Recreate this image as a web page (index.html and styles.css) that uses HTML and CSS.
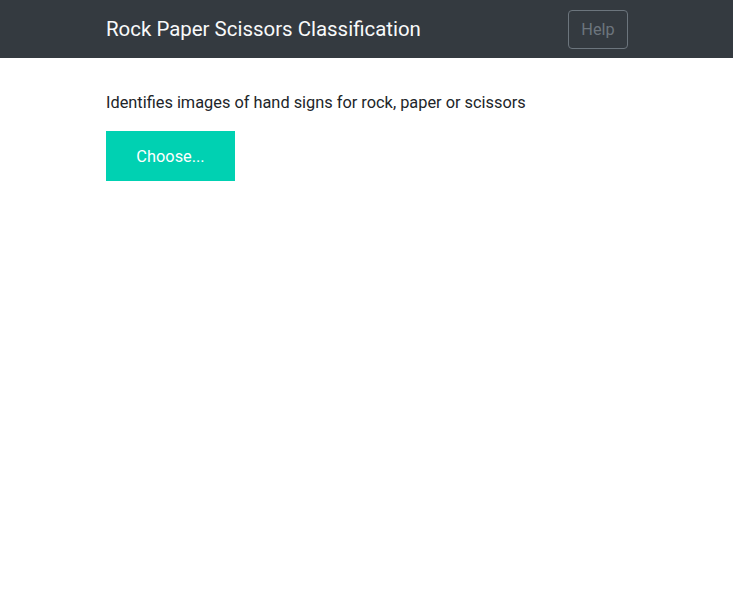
FILE: index.html
```html
<!DOCTYPE html>
<html>
<head>
<meta charset="utf-8">
<link rel="stylesheet" href="styles.css">
</head>
<body>
<header class="navbar">
  <div class="container nav-inner">
    <span class="brand">Rock Paper Scissors Classification</span>
    <button class="help-btn">Help</button>
  </div>
</header>
<main class="container content">
  <p class="lead">Identifies images of hand signs for rock, paper or scissors</p>
  <button class="choose-btn">Choose...</button>
</main>
</body>
</html>
```
FILE: styles.css
```css
html, body {
  margin: 0;
  padding: 0;
  background: #ffffff;
  font-family: Roboto, "Liberation Sans", sans-serif;
  color: #212529;
}
.container {
  width: 521px;
  margin: 0 auto;
}
.navbar {
  background: #343a40;
  height: 58px;
}
.nav-inner {
  height: 58px;
  display: flex;
  align-items: center;
  justify-content: space-between;
}
.brand {
  color: #f8f9fa;
  font-size: 20.45px;
  line-height: 24px;
}
.help-btn {
  width: 60px;
  height: 39px;
  box-sizing: border-box;
  background: transparent;
  border: 1px solid #6c757d;
  border-radius: 4px;
  color: #6c757d;
  font-family: inherit;
  font-size: 16.3px;
  padding: 0;
  margin-right: -1px;
}
.content {
  padding-top: 34px;
}
.lead {
  margin: 0;
  font-size: 16.35px;
  line-height: 22px;
}
.choose-btn {
  margin-top: 17px;
  width: 129px;
  height: 50px;
  background: #00d1b2;
  border: none;
  border-radius: 0;
  color: #ffffff;
  font-family: inherit;
  font-size: 16.35px;
  padding: 0;
  display: block;
}
```
